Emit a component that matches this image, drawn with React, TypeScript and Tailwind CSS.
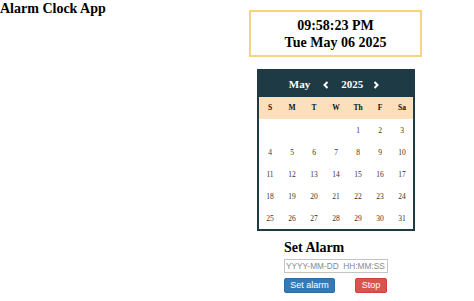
import React from "react";

const serif = { fontFamily: '"Liberation Serif", "Times New Roman", serif' };
const sans = { fontFamily: '"Liberation Sans", Arial, sans-serif' };

const days = ["S", "M", "T", "W", "Th", "F", "Sa"];
const cells: (number | null)[] = [null, null, null, null, 1, 2, 3];
for (let d = 4; d <= 31; d++) cells.push(d);

export default function App() {
  return (
    <div className="flex w-[474px] h-[301px] bg-white text-black" style={serif}>
      <h1 className="w-[249px] text-[14px] leading-[18px] font-bold m-0">Alarm Clock App</h1>
      <div className="flex flex-col items-start pt-[10px]">
        <div className="w-[173px] h-[47px] border-2 border-[#f6d283] flex flex-col items-center justify-center text-[14px] font-bold leading-[17px]">
          <div>09:58:23 PM</div>
          <div>Tue May 06 2025</div>
        </div>
        <div className="ml-[8px] mt-[12px] w-[158px] border-2 border-[#1e3a44]">
          <div className="h-[26px] bg-[#1e3a44] text-white flex items-center justify-center text-[11px] font-bold pr-[4px] pt-[1px]">
            <span>May</span>
            <svg className="ml-[13px]" width="6" height="8" viewBox="0 0 6 8">
              <polyline points="4.5,1 1.5,4 4.5,7" fill="none" stroke="white" strokeWidth="2" />
            </svg>
            <span className="ml-[12px]">2025</span>
            <svg className="ml-[10px]" width="6" height="8" viewBox="0 0 6 8">
              <polyline points="1.5,1 4.5,4 1.5,7" fill="none" stroke="white" strokeWidth="2" />
            </svg>
          </div>
          <div className="grid grid-cols-7 h-[22px] bg-[#fde0bb] text-[7.5px] font-bold text-[#111]">
            {days.map((d) => (
              <div key={d} className="flex items-center justify-center">{d}</div>
            ))}
          </div>
          <div className="grid grid-cols-7 text-[7.5px] text-[#333]">
            {cells.map((c, i) => (
              <div key={i} className="h-[22px] flex items-center justify-center pt-[1px]">{c ?? ""}</div>
            ))}
          </div>
        </div>
        <div className="ml-[35px] mt-[8px] flex flex-col items-start">
          <div className="text-[14px] font-bold leading-[18px]">Set Alarm</div>
          <input
            placeholder="YYYY-MM-DD  HH:MM:SS"
            className="mt-[2px] w-[104px] h-[14px] border border-[#c4c4c4] px-[1px] text-[8.3px] placeholder:text-[#8a8a8a] outline-none"
            style={sans}
          />
          <div className="flex gap-[20px] mt-[5px]" style={sans}>
            <button className="w-[51px] h-[15px] bg-[#337ab7] border border-[#2e6da4] rounded-[2px] text-white text-[9px] leading-none">Set alarm</button>
            <button className="w-[32px] h-[15px] bg-[#d9534f] border border-[#d43f3a] rounded-[2px] text-white text-[9px] leading-none">Stop</button>
          </div>
        </div>
      </div>
    </div>
  );
}
